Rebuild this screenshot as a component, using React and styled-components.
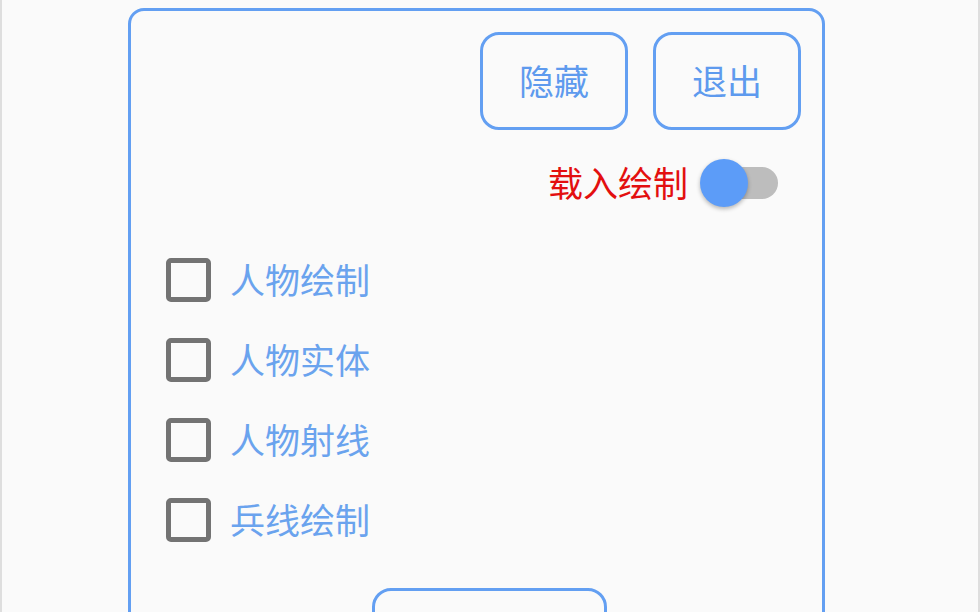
import React, { useState } from "react";
import styled, { createGlobalStyle } from "styled-components";

const Global = createGlobalStyle`
  html, body { margin: 0; padding: 0; background: #fafafa; }
  body { font-family: "Noto Sans CJK SC", "Noto Sans", sans-serif; }
`;

const Frame = styled.div`
  box-sizing: border-box;
  width: 980px;
  height: 612px;
  overflow: hidden;
  background: #fafafa;
  border-left: 2px solid #dedede;
  border-right: 2px solid #dedede;
  padding: 8px 0 0 126px;
`;

const Panel = styled.div`
  box-sizing: border-box;
  width: 697px;
  min-height: 700px;
  border: 3px solid #639ff2;
  border-radius: 16px;
  padding: 21px 21px 0 0;
  display: flex;
  flex-direction: column;
`;

const TopBar = styled.div`
  display: flex;
  justify-content: flex-end;
  gap: 25px;
`;

const OutlineButton = styled.button`
  box-sizing: border-box;
  width: ${(p) => p.$w || 148}px;
  height: 98px;
  border: 3px solid #639ff2;
  border-radius: 19px;
  background: transparent;
  color: #5e9aee;
  font-family: "Noto Sans CJK SC", sans-serif;
  font-size: 35px;
  font-weight: 400;
  padding: 0 0 4px;
  line-height: 1;
  display: flex;
  align-items: center;
  justify-content: center;
`;

const ToggleRow = styled.div`
  display: flex;
  justify-content: flex-end;
  align-items: center;
  gap: 12px;
  margin-top: 29px;
  margin-right: 23px;
`;

const ToggleLabel = styled.span`
  color: #e30f0f;
  font-size: 35px;
  line-height: 1;
  padding-bottom: 3px;
`;

const Toggle = styled.div`
  position: relative;
  width: 78px;
  height: 48px;
`;

const Track = styled.div`
  position: absolute;
  left: 24px;
  right: 0;
  top: 8px;
  height: 32px;
  border-radius: 16px;
  background: #bdbdbd;
`;

const Thumb = styled.div`
  position: absolute;
  left: ${(p) => (p.$on ? 30 : 0)}px;
  top: 0;
  width: 48px;
  height: 48px;
  border-radius: 50%;
  background: #5c9cf8;
  box-shadow: 0 2px 4px rgba(0, 0, 0, 0.28);
`;

const List = styled.div`
  display: flex;
  flex-direction: column;
  margin-top: 33px;
  padding-left: 35px;
`;

const Row = styled.label`
  display: flex;
  align-items: center;
  height: 80px;
  gap: 19px;
`;

const Box = styled.span`
  box-sizing: border-box;
  width: 45px;
  height: 44px;
  border: 5px solid #737373;
  border-radius: 5px;
  background: ${(p) => (p.$checked ? "#737373" : "transparent")};
`;

const RowLabel = styled.span`
  color: #6aa3ee;
  font-size: 35px;
  line-height: 1;
  padding-bottom: 3px;
`;

const BottomBar = styled.div`
  display: flex;
  justify-content: center;
  padding-left: 47px;
  margin-top: 28px;
`;

const items = ["人物绘制", "人物实体", "人物射线", "兵线绘制"];

export default function App() {
  const [checked, setChecked] = useState({});
  const [on, setOn] = useState(false);
  return (
    <>
      <Global />
      <Frame>
        <Panel>
          <TopBar>
            <OutlineButton>隐藏</OutlineButton>
            <OutlineButton>退出</OutlineButton>
          </TopBar>
          <ToggleRow>
            <ToggleLabel>载入绘制</ToggleLabel>
            <Toggle onClick={() => setOn(!on)}>
              <Track />
              <Thumb $on={on} />
            </Toggle>
          </ToggleRow>
          <List>
            {items.map((t) => (
              <Row key={t} onClick={() => setChecked({ ...checked, [t]: !checked[t] })}>
                <Box $checked={!!checked[t]} />
                <RowLabel>{t}</RowLabel>
              </Row>
            ))}
          </List>
          <BottomBar>
            <OutlineButton $w={235} aria-label="确定" />
          </BottomBar>
        </Panel>
      </Frame>
    </>
  );
}
